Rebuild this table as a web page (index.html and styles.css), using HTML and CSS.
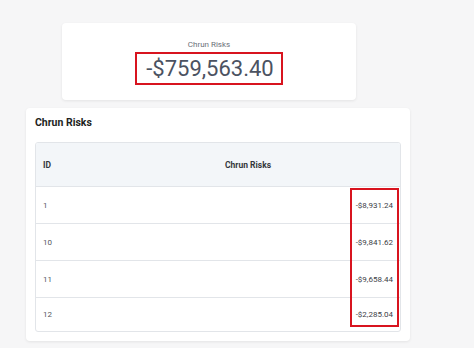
FILE: index.html
```html
<!DOCTYPE html>
<html>
<head>
<meta charset="utf-8">
<link rel="stylesheet" href="styles.css">
</head>
<body>
<div class="page">
  <div class="kpi-card">
    <div class="kpi-label">Chrun Risks</div>
    <div class="kpi-value">-$759,563.40</div>
  </div>
  <div class="table-card">
    <div class="table-title">Chrun Risks</div>
    <div class="table-wrap">
      <table class="data">
        <thead>
          <tr><th>ID</th><th>Chrun Risks</th></tr>
        </thead>
        <tbody>
          <tr><td class="id">1</td><td class="num">-$8,931.24</td></tr>
          <tr><td class="id">10</td><td class="num">-$9,841.62</td></tr>
          <tr><td class="id">11</td><td class="num">-$9,658.44</td></tr>
          <tr><td class="id">12</td><td class="num">-$2,285.04</td></tr>
        </tbody>
      </table>
      <div class="highlight"></div>
    </div>
  </div>
</div>
</body>
</html>
```
FILE: styles.css
```css
html, body {
  margin: 0;
  padding: 0;
  background: #f6f6f7;
  font-family: Roboto, "Liberation Sans", Arial, sans-serif;
}
.page {
  width: 474px;
  height: 348px;
  overflow: hidden;
  padding-top: 23px;
  box-sizing: border-box;
}
.kpi-card {
  margin-left: 62px;
  width: 294px;
  height: 77px;
  box-sizing: border-box;
  background: #fff;
  border-radius: 4px;
  box-shadow: 0 1px 3px rgba(0,0,0,0.08);
  display: flex;
  flex-direction: column;
  align-items: center;
  padding-top: 17px;
}
.kpi-label {
  font-size: 8px;
  line-height: 10px;
  color: #6b7079;
  margin-bottom: 2px;
}
.kpi-value {
  font-size: 22px;
  line-height: 29px;
  color: #4b5261;
  border: 2px solid #d8141f;
  padding: 0 7px 0 9px;
}
.table-card {
  margin: 8px 0 0 26px;
  width: 384px;
  box-sizing: border-box;
  background: #fff;
  border-radius: 4px;
  box-shadow: 0 1px 3px rgba(0,0,0,0.08);
  padding: 8px 9px 9px 9px;
}
.table-title {
  font-size: 10.5px;
  line-height: 14px;
  font-weight: 700;
  color: #1e1f22;
  margin-bottom: 12px;
}
.table-wrap {
  position: relative;
  border: 1px solid #e2e5e9;
  border-radius: 3px;
  overflow: hidden;
}
.data {
  width: 100%;
  border-collapse: collapse;
  table-layout: fixed;
}
.data th {
  background: #f3f6f9;
  height: 43px;
  padding: 0 7px;
  text-align: left;
  font-size: 8.5px;
  font-weight: 700;
  color: #33363b;
  border-bottom: 1px solid #e2e5e9;
}
.data td {
  height: 36px;
  padding: 0 7px;
  font-size: 8px;
  color: #3d4046;
  border-bottom: 1px solid #e2e5e9;
}
.data tr:last-child td {
  height: 33px;
  border-bottom: none;
}
.data td.id {
  color: #55585e;
}
.data td.num {
  text-align: right;
}
.highlight {
  position: absolute;
  left: 314px;
  top: 45px;
  width: 49px;
  height: 139px;
  box-sizing: border-box;
  border: 2px solid #d8141f;
}
```
